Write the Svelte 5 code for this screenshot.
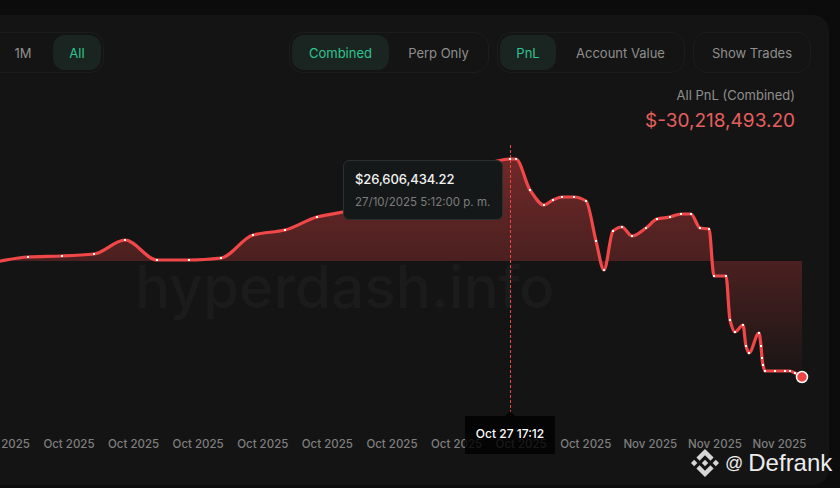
<script>
	// chart points in page coordinates, the svg viewBox starts at y=140
	const points = [
		[-6, 262], [28, 257], [62, 256], [94, 254], [125, 240], [157, 260], [189, 260], [221, 258],
		[253, 235], [285, 230], [317, 217], [349, 211], [381, 205], [413, 196], [445, 186], [477, 172],
		[497, 161], [510, 159], [516, 159], [530, 190], [544, 205], [553, 200], [562, 197], [574, 197],
		[586, 201], [596, 241], [604, 270], [613, 231], [622, 227], [632, 236], [646, 228], [657, 219],
		[670, 217], [681, 214], [691, 214], [700, 228], [709, 229], [714, 276], [726, 276], [730, 320],
		[735, 332], [743, 325], [746, 346], [749, 353], [759, 333], [761, 346], [762, 358],
		[763, 365], [765, 371], [775, 371], [785, 371], [790, 371], [795, 373], [802, 377]
	];

	const zero = 261;
	const months = ["Oct", "Oct", "Oct", "Oct", "Oct", "Oct", "Oct", "Oct", "Oct", "Oct", "Nov", "Nov", "Nov"];

	// monotone cubic so the line doesn't overshoot between samples
	function monotone(pts) {
		const n = pts.length;
		const d = [];
		for (let i = 0; i < n - 1; i++) {
			d.push((pts[i + 1][1] - pts[i][1]) / (pts[i + 1][0] - pts[i][0]));
		}
		const m = [d[0]];
		for (let i = 1; i < n - 1; i++) {
			m.push(d[i - 1] * d[i] <= 0 ? 0 : (2 * d[i - 1] * d[i]) / (d[i - 1] + d[i]));
		}
		m.push(d[n - 2]);
		let path = `M${pts[0][0]} ${pts[0][1]}`;
		for (let i = 0; i < n - 1; i++) {
			const h = (pts[i + 1][0] - pts[i][0]) / 3;
			const c1y = pts[i][1] + m[i] * h;
			const c2y = pts[i + 1][1] - m[i + 1] * h;
			path += `C${pts[i][0] + h} ${c1y} ${pts[i + 1][0] - h} ${c2y} ${pts[i + 1][0]} ${pts[i + 1][1]}`;
		}
		return path;
	}

	const line = monotone(points);
	const area = `${line}L802 ${zero}L-6 ${zero}Z`;
	const dots = points.filter((p) => p[0] > 0 && p[0] < 802 && (p[0] < 343 || p[0] > 502));
</script>

<div class="card">
	<div class="toolbar">
		<div class="group range">
			<button class="month">1M</button>
			<button class="active">All</button>
		</div>
		<div class="right">
			<div class="group">
				<button class="active combined">Combined</button>
				<button class="perp">Perp Only</button>
			</div>
			<div class="group">
				<button class="active pnl">PnL</button>
				<button class="value">Account Value</button>
			</div>
			<div class="group">
				<button class="trades">Show Trades</button>
			</div>
		</div>
	</div>

	<div class="summary">
		<div class="label">All PnL (Combined)</div>
		<div class="amount">$-30,218,493.20</div>
	</div>

	<div class="chart">
		<svg width="840" height="280" viewBox="0 140 840 280">
			<defs>
				<linearGradient id="fill" gradientUnits="userSpaceOnUse" x1="0" y1="159" x2="0" y2="377">
					<stop offset="0" stop-color="#ef4444" stop-opacity="0.42" />
					<stop offset="0.47" stop-color="#ef4444" stop-opacity="0.25" />
					<stop offset="1" stop-color="#ef4444" stop-opacity="0.02" />
				</linearGradient>
			</defs>
			<text class="mark" x="135" y="308">hyperdash.info</text>
			<path d={area} fill="url(#fill)" />
			<path d={line} class="stroke" />
			{#each dots as p}
				<rect x={p[0] - 1} y={p[1] - 1} width="2" height="2" fill="#fff" />
			{/each}
			<line x1="510.5" y1="145" x2="510.5" y2="416" class="cross" />
			<circle cx="802" cy="377" r="5.5" fill="#ef4444" stroke="#fff" stroke-width="1.5" />
		</svg>

		<div class="tip">
			<div class="tip-value">$26,606,434.22</div>
			<div class="tip-date">27/10/2025 5:12:00 p. m.</div>
		</div>

		<div class="axis">
			<span>Oct 2025</span>
			{#each months as m}
				<span>{m} 2025</span>
			{/each}
		</div>

		<div class="time">Oct 27 17:12</div>
	</div>

	<div class="credit">
		<svg width="28" height="28" viewBox="0 0 126.61 126.61" fill="#d6d6d6">
			<path d="M38.73 53.2l24.59-24.58 24.6 24.6 14.3-14.31L63.32 0 24.42 38.9l14.31 14.3zM0 63.31l14.3-14.31 14.31 14.31-14.31 14.3zM38.73 73.41l24.59 24.59 24.6-24.6 14.31 14.29-38.9 38.91-38.91-38.88-.02-.02zM98 63.31l14.3-14.31 14.31 14.3-14.31 14.32zM77.83 63.3L63.32 48.78 52.59 59.51l-1.24 1.23-2.54 2.54 14.51 14.5 14.51-14.47z" />
		</svg>
		<span class="at">@</span>
		<span class="name">Defrank</span>
	</div>
</div>

<style>
	:global(body) {
		background: #0c0c0c;
		overflow: hidden;
	}

	.card {
		position: relative;
		width: 829px;
		height: 470px;
		margin-top: 15px;
		background: #141414;
		border-radius: 0 16px 16px 0;
		font-family: Inter, "Liberation Sans", sans-serif;
	}

	.toolbar {
		display: flex;
		justify-content: space-between;
		padding: 17px 18px 0 0;
	}

	.right {
		display: flex;
		gap: 8px;
	}

	.group {
		display: flex;
		height: 41px;
		box-sizing: border-box;
		padding: 2px;
		border: 1px solid #1c1c1c;
		border-radius: 14px;
	}

	.range {
		margin-left: -20px;
		padding-left: 20px;
	}

	button {
		height: 35px;
		padding: 0 14px;
		background: none;
		border: none;
		border-radius: 12px;
		color: #8f8f8f;
		font: 400 13px Inter, "Liberation Sans", sans-serif;
	}

	button.active {
		background: #1a2521;
		color: #2ec490;
	}

	.range button {
		width: 48px;
		padding: 0;
	}

	.range .month {
		width: 52px;
		padding-right: 8px;
	}

	.combined {
		width: 97px;
	}

	.perp {
		width: 97px;
		padding-left: 16px;
	}

	.pnl {
		width: 56px;
	}

	.value {
		width: 126px;
		padding-left: 17px;
		padding-right: 14px;
	}

	.trades {
		width: 112px;
	}

	.summary {
		margin-top: 13px;
		padding-right: 34px;
		text-align: right;
	}

	.label {
		color: #8f8f8f;
		font-size: 13px;
		line-height: 18px;
	}

	.amount {
		margin-top: 4px;
		color: #e65f5f;
		font-size: 19px;
		line-height: 26px;
	}

	.chart {
		position: relative;
		margin-top: 6px;
	}

	.chart svg {
		display: block;
	}

	.mark {
		fill: #1b1b1b;
		font-size: 58.5px;
		font-weight: 500;
		font-family: Inter, "Liberation Sans", sans-serif;
	}

	.stroke {
		fill: none;
		stroke: #f04848;
		stroke-width: 3.2;
		stroke-linejoin: round;
		stroke-linecap: round;
	}

	.cross {
		stroke: #ef4444;
		stroke-width: 1;
		stroke-dasharray: 3 2;
	}

	.tip {
		position: absolute;
		left: 343px;
		top: 20px;
		box-sizing: border-box;
		width: 160px;
		height: 60px;
		padding: 9px 11px;
		background: #141818;
		border: 1px solid #2a2f2f;
		border-radius: 6px;
	}

	.tip-value {
		color: #f2f2f2;
		font-size: 13px;
		font-weight: 500;
		letter-spacing: -0.1px;
		line-height: 18px;
	}

	.tip-date {
		margin-top: 6px;
		color: #7c7c7c;
		font-size: 11.5px;
		line-height: 16px;
	}

	.axis {
		display: flex;
		margin: 16px 0 0 -92.5px;
		color: #7f7f7f;
		font-size: 11.5px;
		font-weight: 500;
		line-height: 16px;
		white-space: nowrap;
	}

	.axis span {
		flex: 0 0 64.6px;
		text-align: center;
	}

	.time {
		position: absolute;
		left: 465px;
		top: 276px;
		box-sizing: border-box;
		width: 90px;
		height: 38px;
		padding-top: 10px;
		background: rgba(0, 0, 0, 0.8);
		color: #fff;
		font-size: 12px;
		font-weight: 500;
		line-height: 16px;
		text-align: center;
	}

	.time::before {
		content: "";
		position: absolute;
		left: 40px;
		top: -5px;
		border: 5px solid transparent;
		border-top: 0;
		border-bottom-color: rgba(0, 0, 0, 0.8);
	}

	.credit {
		position: absolute;
		left: 691px;
		top: 434px;
		display: flex;
		align-items: center;
		color: #ececec;
		font-family: "Liberation Sans", sans-serif;
		white-space: nowrap;
	}

	.at {
		margin-left: 6px;
		font-size: 18px;
	}

	.name {
		margin-left: 5px;
		font-size: 24px;
	}
</style>
